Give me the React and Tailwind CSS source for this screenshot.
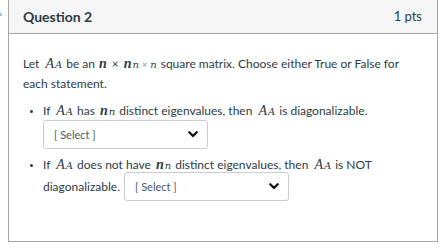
import React from 'react'

const MathA = () => (
  <>
    <span className="font-['Liberation_Serif',serif] italic text-[14px] ml-[3px]">A</span>
    <span className="font-['DejaVu_Serif',serif] italic text-[10px] ml-[1px] mr-[4px]">A</span>
  </>
)

const MathN = () => (
  <>
    <span className="font-['Liberation_Serif',serif] italic font-semibold text-[14px] ml-[2px]">n</span>
    <span className="font-['DejaVu_Serif',serif] italic text-[10px] ml-[1px] mr-[4px]">n</span>
  </>
)

function Select() {
  return (
    <div className="w-[165px] h-[29px] border border-[#c7cdd1] rounded-[3px] bg-white flex items-center justify-between pl-[10px] pr-[9px] shrink-0">
      <span className="text-[11px] text-[#4a5a66]">[ Select ]</span>
      <svg width="10" height="7" viewBox="0 0 10 7">
        <path d="M1.3 1.3 5 5 8.7 1.3" fill="none" stroke="#111" strokeWidth="2.3" strokeLinecap="round" strokeLinejoin="round" />
      </svg>
    </div>
  )
}

export default function App() {
  return (
    <div className="w-[445px] h-[251px] bg-white flex font-['Lato',sans-serif] text-[#2d3b45] overflow-hidden">
      <div className="w-[8px] pt-[13px]">
        <div className="w-[2px] h-[3px] bg-[#a9c6e0]" />
      </div>

      <div className="w-[430px] h-[242px] border-x border-b border-[#a6a6a6] flex flex-col">
        <div className="h-[34px] bg-[#f5f5f5] border-b border-[#a6a6a6] flex items-center justify-between pl-[14px] pr-[15px]">
          <span className="text-[14px] font-bold">Question 2</span>
          <span className="text-[13px]">1 pts</span>
        </div>

        <div className="pl-[14px] pr-[15px] pt-[20px] text-[12px] leading-[19px]">
          <p>
            Let <MathA />be an
            <span className="font-['Liberation_Serif',serif] italic font-semibold text-[14px] ml-[4px]">n</span>
            <span className="mx-[5px]">×</span>
            <span className="font-['Liberation_Serif',serif] italic font-semibold text-[14px]">n</span>
            <span className="font-['DejaVu_Serif',serif] italic text-[10px] ml-[1px]">n</span>
            <span className="text-[9px] text-[#8a97a0] mx-[3px]">×</span>
            <span className="font-['DejaVu_Serif',serif] italic text-[10px] mr-[4px]">n</span>
            square matrix. Choose either True or False for each statement.
          </p>

          <ul className="list-disc pl-[20px] mt-[9px] leading-[17px] marker:text-[9px]">
            <li>
              <div>
                If <MathA />has <MathN />distinct eigenvalues, then <MathA />is diagonalizable.
              </div>
              <Select />
            </li>
            <li className="mt-[7px]">
              <div>
                If <MathA />does not have <MathN />distinct eigenvalues, then <MathA />is NOT
              </div>
              <div className="flex items-center gap-[4px] -mt-[2px]">
                <span>diagonalizable.</span>
                <Select />
              </div>
            </li>
          </ul>
        </div>
      </div>
    </div>
  )
}
